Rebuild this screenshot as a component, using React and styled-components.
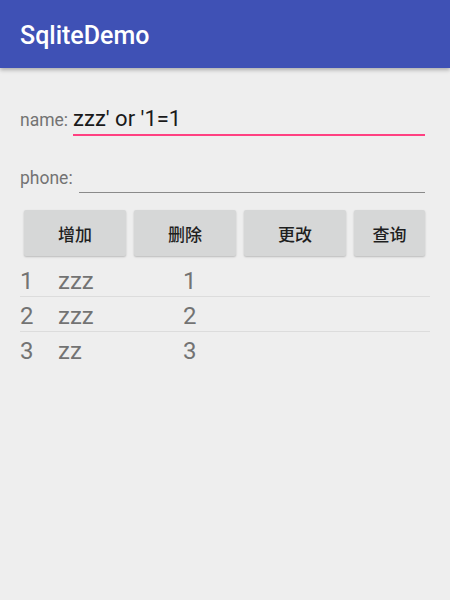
import React from 'react'
import styled, { createGlobalStyle } from 'styled-components'

const GlobalStyle = createGlobalStyle`
  html, body {
    margin: 0;
    padding: 0;
    background: #eeeeee;
  }
  body {
    font-family: Roboto, "Noto Sans CJK SC", sans-serif;
  }
  * { box-sizing: border-box; }
`

const rows = [
  { id: 1, name: 'zzz', phone: '1' },
  { id: 2, name: 'zzz', phone: '2' },
  { id: 3, name: 'zz', phone: '3' },
]

const buttons = [
  { label: '增加', width: 102 },
  { label: '删除', width: 102 },
  { label: '更改', width: 102 },
  { label: '查询' },
]

const App = () => {
  return (
    <Page>
      <GlobalStyle />
      <AppBar>
        <Title>SqliteDemo</Title>
      </AppBar>
      <Form>
        <FieldRow>
          <Label>name:</Label>
          <Input $focused defaultValue="zzz' or '1=1" readOnly />
        </FieldRow>
        <FieldRow className='phone'>
          <Label>phone:</Label>
          <Input readOnly />
        </FieldRow>
        <ButtonBar>
          {buttons.map((b) => (
            <Button key={b.label} $width={b.width}>{b.label}</Button>
          ))}
        </ButtonBar>
      </Form>
      <Table>
        {rows.map((r) => (
          <Row key={r.id}>
            <span className='id'>{r.id}</span>
            <span className='name'>{r.name}</span>
            <span className='phone'>{r.phone}</span>
          </Row>
        ))}
      </Table>
    </Page>
  )
}

export default App

let Page = styled.div`
width:450px;
min-height:600px;
background:#eeeeee;
`

let AppBar = styled.header`
height:68px;
background:#3f51b5;
padding:22px 0 0 20px;
box-shadow:0 2px 4px rgba(0,0,0,0.28);
position:relative;
z-index:1;
`

let Title = styled.h1`
margin:0;
font-size:25px;
line-height:28px;
font-weight:500;
color:#ffffff;
`

let Form = styled.div`
padding:37px 25px 0 20px;
`

let FieldRow = styled.div`
display:flex;
align-items:baseline;
&.phone{
    margin-top:27px;
 }
&.phone input{
    margin-left:1px;
 }
`

let Label = styled.label`
font-size:17.5px;
color:#737373;
margin-right:5px;
white-space:nowrap;
`

let Input = styled.input`
flex:1;
min-width:0;
height:${(p) => (p.$focused ? '31px' : '30px')};
padding:0 0 3px 0;
margin:0;
border:none;
border-bottom:${(p) => (p.$focused ? '2px solid #ff4081' : '1px solid #8a8a8a')};
background:transparent;
font-family:Roboto, sans-serif;
font-size:22px;
line-height:26px;
color:#1a1a1a;
outline:none;
`

let ButtonBar = styled.div`
display:flex;
gap:8px;
margin:17px 0 0 4px;
`

let Button = styled.button`
${(p) => (p.$width ? `width:${p.$width}px;` : 'flex:1;')}
height:46px;
border:none;
border-radius:2px;
background:#d6d7d7;
box-shadow:0 1px 2px rgba(0,0,0,0.22);
font-family:Roboto, "Noto Sans CJK SC", sans-serif;
font-size:17px;
font-weight:500;
color:#1f1f1f;
padding:0;
`

let Table = styled.div`
margin:6px 20px 0 20px;
`

let Row = styled.div`
display:flex;
height:35px;
padding-top:4px;
border-bottom:1px solid #dcdcdc;
font-size:24px;
line-height:30px;
color:#737373;
&:last-child{
    border-bottom:none;
 }
.id{
    width:38px;
 }
.name{
    width:125px;
 }
`
